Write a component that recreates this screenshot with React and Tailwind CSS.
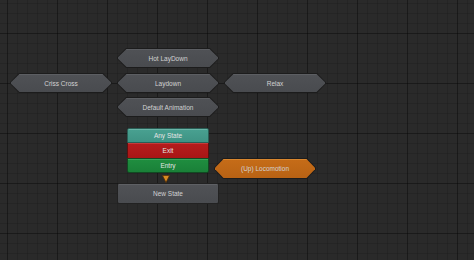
import React from "react";

const font = { fontFamily: '"Liberation Sans", Arial, sans-serif' };

function Hex({ className, fill, children }) {
  return (
    <div className={`absolute ${className} bg-[#1c1c1c] [clip-path:polygon(9px_0,calc(100%-9px)_0,100%_46%,100%_54%,calc(100%-9px)_100%,9px_100%,0_54%,0_46%)]`}>
      <div className={`absolute inset-[1px] ${fill} flex items-center justify-center pt-[1px] text-[6.5px] text-[#d2d2d2] [clip-path:polygon(8.5px_0,calc(100%-8.5px)_0,100%_46%,100%_54%,calc(100%-8.5px)_100%,8.5px_100%,0_54%,0_46%)]`}>
        {children}
      </div>
    </div>
  );
}

export default function App() {
  const gray = "bg-[linear-gradient(to_bottom,#5c5e62_0px,#5c5e62_1px,#4f5155_1px,#494b4f_100%)]";
  return (
    <div
      style={font}
      className="relative w-[474px] h-[260px] overflow-hidden bg-[#2a2a2a] [background-image:linear-gradient(to_right,rgba(0,0,0,0.3)_1px,transparent_1px),linear-gradient(to_bottom,rgba(0,0,0,0.3)_1px,transparent_1px),linear-gradient(to_right,rgba(0,0,0,0.12)_1px,transparent_1px),linear-gradient(to_bottom,rgba(0,0,0,0.12)_1px,transparent_1px)] [background-size:50px_50px,50px_50px,10px_10px,10px_10px] [background-position:7px_33px,7px_33px,7px_3px,7px_3px]"
    >
      <Hex className="left-[117px] top-[48px] w-[102px] h-[20px]" fill={gray}>Hot LayDown</Hex>
      <Hex className="left-[10px] top-[73px] w-[102px] h-[20px]" fill={gray}>Criss Cross</Hex>
      <Hex className="left-[117px] top-[73px] w-[102px] h-[20px]" fill={gray}>Laydown</Hex>
      <Hex className="left-[224px] top-[73px] w-[102px] h-[20px]" fill={gray}>Relax</Hex>
      <Hex className="left-[117px] top-[97px] w-[102px] h-[20px]" fill={gray}>Default Animation</Hex>

      <div className="absolute left-[127px] top-[128px] w-[82px] flex flex-col text-[6.5px] text-[#e4e4e4]">
        <div className="h-[15px] flex items-center justify-center rounded-t-[2px] bg-[linear-gradient(to_bottom,#6ab5a8_0px,#6ab5a8_1px,#48a090_1px,#3f9384_100%)] border border-[#2a5e55]">Any State</div>
        <div className="h-[15px] flex items-center justify-center bg-[linear-gradient(to_bottom,#c63a3a_0px,#c63a3a_1px,#b51c1c_1px,#a81616_100%)] border-x border-[#5a1010]">Exit</div>
        <div className="h-[15px] flex items-center justify-center rounded-b-[2px] bg-[linear-gradient(to_bottom,#3aa25a_0px,#3aa25a_1px,#1f8d3f_1px,#1a8038_100%)] border border-[#114a22]">Entry</div>
      </div>

      <svg className="absolute left-[162px] top-[175px]" width="8" height="8" viewBox="0 0 8 8">
        <polygon points="0.5,0.5 7.5,0.5 4,7.5" fill="#d98a22" stroke="#5a3408" strokeWidth="0.8" />
      </svg>

      <div className="absolute left-[117px] top-[183px] w-[102px] h-[21px] rounded-[2px] border border-[#222] bg-[linear-gradient(to_bottom,#5e6064_0px,#5e6064_1px,#505256_1px,#494b4f_100%)] flex items-center justify-center text-[6.5px] text-[#d2d2d2]">New State</div>

      <Hex className="left-[214px] top-[158px] w-[102px] h-[21px]" fill="bg-[linear-gradient(to_bottom,#d9862e_0px,#d9862e_1px,#c56c18_1px,#b86214_100%)]">(Up) Locomotion</Hex>
    </div>
  );
}
